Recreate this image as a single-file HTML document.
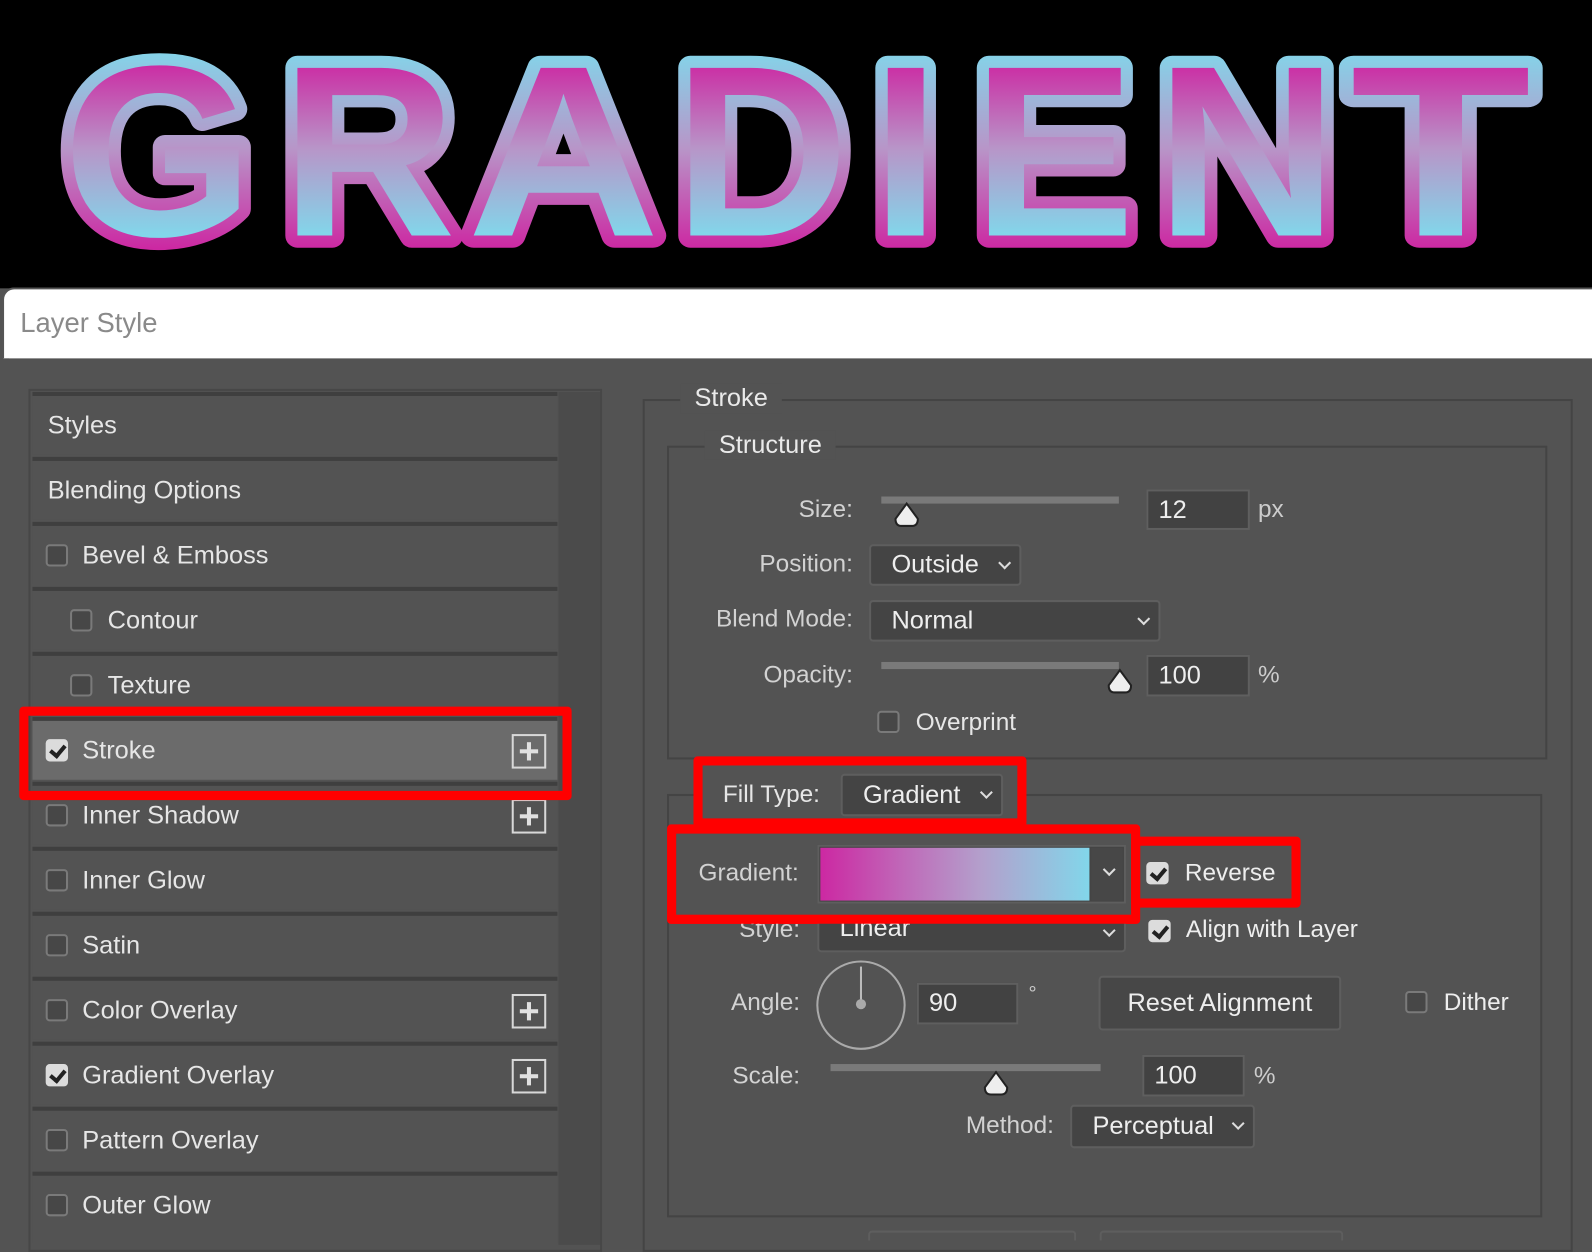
<!DOCTYPE html>
<html><head><meta charset="utf-8"><style>
*{margin:0;padding:0;box-sizing:border-box}
html,body{width:1592px;height:1237px;overflow:hidden;background:#535353}
#w{position:absolute;left:0;top:0;width:1568px;height:1218px;transform:scale(1.01531);transform-origin:0 0;font-family:"Liberation Sans",sans-serif;color:#e6e6e6}
.a{position:absolute}
.top{left:0;top:0;width:1568px;height:284px;background:#000}
.title{left:2px;top:283px;width:1566px;height:70px;background:#fff;border-top:2px solid #555;border-left:2px solid #555;border-radius:12px 0 0 0}
.title span{position:absolute;left:16px;top:18px;font-size:27px;color:#8a8a8a}
.lp{left:28px;top:383px;width:565px;height:850px;border:2px solid #474747;border-right:2px solid #474747}
.sb{left:550px;top:386px;width:41px;height:840px;background:#4b4b4b}
.row{position:absolute;left:32px;width:517px;height:62px;background:#535353;border-top:4px solid #3f3f3f;font-size:25px}
.row span{position:absolute;top:15px}
.cb{position:absolute;width:22px;height:22px;border:2px solid #7a7a7a;border-radius:4px;background:#474747;top:18px}
.cb.on{background:#dcdcdc;border-color:#dcdcdc}
.cb.on:after{content:"";position:absolute;left:5px;top:1px;width:6px;height:11px;border:solid #222;border-width:0 4px 4px 0;transform:rotate(40deg)}
.plus{position:absolute;left:472px;top:13px;width:34px;height:34px;border:2px solid #d8d8d8}
.plus:before{content:"";position:absolute;left:6px;top:13px;width:18px;height:4px;background:#e0e0e0}
.plus:after{content:"";position:absolute;left:13px;top:6px;width:4px;height:18px;background:#e0e0e0}
.red{border:9px solid #ff0000;border-radius:4px}
.fs{border:2px solid #444}
.lg{position:absolute;background:#535353;font-size:25px;padding:0 14px;color:#eaeaea}
.lbl{position:absolute;font-size:24px;color:#d2d2d2;text-align:right}
.box{position:absolute;background:#424242;border:2px solid #5f5f5f;font-size:25px;color:#eee;padding-left:10px}
.dd{position:absolute;background:#444;border:2px solid #5e5e5e;border-radius:4px;font-size:25px;color:#eee;padding-left:20px}
.dd i,.ch{position:absolute;right:10px;top:12px;width:9px;height:9px;border:solid #ddd;border-width:0 2px 2px 0;transform:rotate(45deg)}
.track{position:absolute;height:7px;background:#7a7a7a}
.thumb{position:absolute;width:26px;height:26px}
</style></head><body><div id="w">
<div class="a top">
<svg width="1568" height="284" viewBox="0 0 1568 284">
<defs>
<linearGradient id="f" gradientUnits="userSpaceOnUse" x1="0" y1="60" x2="0" y2="232"><stop offset="0" stop-color="#cc28a2"/><stop offset=".5" stop-color="#b895c8"/><stop offset="1" stop-color="#82d6ea"/></linearGradient>
<linearGradient id="s" gradientUnits="userSpaceOnUse" x1="0" y1="48" x2="0" y2="245"><stop offset="0" stop-color="#82d6ea"/><stop offset=".5" stop-color="#b895c8"/><stop offset="1" stop-color="#cc28a2"/></linearGradient>
</defs>
<g font-family="Liberation Sans" font-weight="bold" font-size="240" fill="url(#f)" stroke="url(#s)" stroke-width="24" stroke-linejoin="round" paint-order="stroke">
<text x="62" y="232" textLength="188" lengthAdjust="spacingAndGlyphs">G</text>
<text x="277" y="232" textLength="172" lengthAdjust="spacingAndGlyphs">R</text>
<text x="460" y="232" textLength="190" lengthAdjust="spacingAndGlyphs">A</text>
<text x="664" y="232" textLength="172" lengthAdjust="spacingAndGlyphs">D</text>
<text x="858" y="232" textLength="68" lengthAdjust="spacingAndGlyphs">I</text>
<text x="958" y="232" textLength="160" lengthAdjust="spacingAndGlyphs">E</text>
<text x="1138" y="232" textLength="180" lengthAdjust="spacingAndGlyphs">N</text>
<text x="1330" y="232" textLength="178" lengthAdjust="spacingAndGlyphs">T</text>
</g></svg></div>
<div class="a title"><span>Layer Style</span></div>

<div class="a lp"></div><div class="a sb"></div>
<div class="row" style="top:386px"><span style="left:15px">Styles</span></div>
<div class="row" style="top:450px"><span style="left:15px">Blending Options</span></div>
<div class="row" style="top:514px"><div class="cb" style="left:13px"></div><span style="left:49px">Bevel &amp; Emboss</span></div>
<div class="row" style="top:578px"><div class="cb" style="left:37px"></div><span style="left:74px">Contour</span></div>
<div class="row" style="top:642px"><div class="cb" style="left:37px"></div><span style="left:74px">Texture</span></div>
<div class="row" style="top:706px;background:#6b6b6b"><div class="cb on" style="left:13px"></div><span style="left:49px">Stroke</span><div class="plus"></div></div>
<div class="row" style="top:770px"><div class="cb" style="left:13px"></div><span style="left:49px">Inner Shadow</span><div class="plus"></div></div>
<div class="row" style="top:834px"><div class="cb" style="left:13px"></div><span style="left:49px">Inner Glow</span></div>
<div class="row" style="top:898px"><div class="cb" style="left:13px"></div><span style="left:49px">Satin</span></div>
<div class="row" style="top:962px"><div class="cb" style="left:13px"></div><span style="left:49px">Color Overlay</span><div class="plus"></div></div>
<div class="row" style="top:1026px"><div class="cb on" style="left:13px"></div><span style="left:49px">Gradient Overlay</span><div class="plus"></div></div>
<div class="row" style="top:1090px"><div class="cb" style="left:13px"></div><span style="left:49px">Pattern Overlay</span></div>
<div class="row" style="top:1154px;height:70px"><div class="cb" style="left:13px"></div><span style="left:49px">Outer Glow</span></div>
<div class="a red" style="left:19px;top:696px;width:544px;height:92px"></div>

<div class="a fs" style="left:633px;top:393px;width:916px;height:840px"></div>
<div class="lg" style="left:670px;top:378px">Stroke</div>
<div class="a fs" style="left:657px;top:439px;width:867px;height:309px"></div>
<div class="lg" style="left:694px;top:424px">Structure</div>
<div class="a fs" style="left:657px;top:782px;width:862px;height:417px"></div>

<div class="lbl" style="left:700px;top:488px;width:140px">Size:</div>
<div class="track" style="left:868px;top:489px;width:234px"></div>
<svg class="thumb" style="left:880px;top:494px" viewBox="0 0 26 26"><path d="M13 2 L24 17 Q24 24 18 24 L8 24 Q2 24 2 17 Z" fill="#eee" stroke="#222" stroke-width="2"/></svg>
<div class="box" style="left:1129px;top:482px;width:102px;height:40px;line-height:36px">12</div>
<div class="lbl" style="left:1239px;top:488px;color:#ccc">px</div>

<div class="lbl" style="left:700px;top:542px;width:140px">Position:</div>
<div class="dd" style="left:856px;top:536px;width:150px;height:41px;line-height:37px">Outside<i></i></div>
<div class="lbl" style="left:690px;top:596px;width:150px">Blend Mode:</div>
<div class="dd" style="left:856px;top:591px;width:287px;height:41px;line-height:37px">Normal<i></i></div>
<div class="lbl" style="left:700px;top:651px;width:140px">Opacity:</div>
<div class="track" style="left:868px;top:652px;width:234px"></div>
<svg class="thumb" style="left:1090px;top:658px" viewBox="0 0 26 26"><path d="M13 2 L24 17 Q24 24 18 24 L8 24 Q2 24 2 17 Z" fill="#eee" stroke="#222" stroke-width="2"/></svg>
<div class="box" style="left:1129px;top:645px;width:102px;height:41px;line-height:37px">100</div>
<div class="lbl" style="left:1239px;top:651px;color:#ccc">%</div>
<div class="cb" style="left:864px;top:700px"></div>
<div class="lbl" style="left:902px;top:698px;color:#e6e6e6">Overprint</div>

<div class="a" style="left:690px;top:752px;width:316px;height:58px;background:#535353"></div>
<div class="lbl" style="left:712px;top:769px;color:#e6e6e6">Fill Type:</div>
<div class="dd" style="left:828px;top:762px;width:160px;height:42px;line-height:38px">Gradient<i></i></div>
<div class="a red" style="left:683px;top:745px;width:328px;height:70px"></div>

<div class="lbl" style="left:688px;top:846px;color:#d2d2d2">Gradient:</div>
<div class="a" style="left:805px;top:832px;width:304px;height:58px;background:#444;border:2px solid #5e5e5e"></div>
<div class="a" style="left:808px;top:835px;width:265px;height:52px;background:linear-gradient(90deg,#cc28a2,#c067b8 30%,#b3a0cc 60%,#82d6ea)"></div>
<div class="a" style="left:1075px;top:835px;width:31px;height:52px;background:#474747"><div class="ch" style="right:9px;top:17px"></div></div>
<div class="a red" style="left:657px;top:812px;width:466px;height:98px"></div>
<div class="cb on" style="left:1129px;top:849px"></div>
<div class="lbl" style="left:1167px;top:846px;color:#eee">Reverse</div>
<div class="a red" style="left:1114px;top:824px;width:167px;height:70px"></div>

<div class="lbl" style="left:700px;top:902px;width:88px">Style:</div>
<div class="dd" style="left:805px;top:906px;width:304px;height:32px;line-height:20px;overflow:hidden;padding-top:0"><span style="position:relative;top:-4px">Linear</span><i style="top:4px"></i></div>
<div class="a red" style="left:657px;top:812px;width:466px;height:98px;border-top:none;border-left:none;border-right:none;background:transparent"></div>
<div class="cb on" style="left:1131px;top:906px"></div>
<div class="lbl" style="left:1168px;top:902px;color:#eee">Align with Layer</div>

<div class="lbl" style="left:700px;top:974px;width:88px">Angle:</div>
<div class="a" style="left:804px;top:946px;width:88px;height:88px;border:2px solid #aaa;border-radius:50%"></div>
<div class="a" style="left:847px;top:952px;width:2px;height:36px;background:#bbb"></div>
<div class="a" style="left:843px;top:984px;width:10px;height:10px;border-radius:50%;background:#aaa"></div>
<div class="box" style="left:903px;top:968px;width:100px;height:41px;line-height:37px">90</div>
<div class="lbl" style="left:1013px;top:968px;color:#ccc;font-size:20px">°</div>
<div class="a" style="left:1082px;top:961px;width:239px;height:54px;background:#474747;border:2px solid #5e5e5e;border-radius:4px;font-size:25px;text-align:center;line-height:50px;color:#eee">Reset Alignment</div>
<div class="cb" style="left:1384px;top:976px"></div>
<div class="lbl" style="left:1422px;top:974px;color:#eee">Dither</div>

<div class="lbl" style="left:700px;top:1046px;width:88px">Scale:</div>
<div class="track" style="left:818px;top:1048px;width:266px"></div>
<svg class="thumb" style="left:968px;top:1054px" viewBox="0 0 26 26"><path d="M13 2 L24 17 Q24 24 18 24 L8 24 Q2 24 2 17 Z" fill="#eee" stroke="#222" stroke-width="2"/></svg>
<div class="box" style="left:1125px;top:1039px;width:101px;height:41px;line-height:37px">100</div>
<div class="lbl" style="left:1235px;top:1046px;color:#ccc">%</div>
<div class="lbl" style="left:900px;top:1095px;width:138px">Method:</div>
<div class="dd" style="left:1054px;top:1088px;width:182px;height:43px;line-height:39px">Perceptual<i></i></div>
<div class="a" style="left:855px;top:1212px;width:205px;height:10px;border:2px solid #5e5e5e;border-bottom:none;border-radius:4px 4px 0 0"></div>
<div class="a" style="left:1083px;top:1212px;width:240px;height:10px;border:2px solid #5e5e5e;border-bottom:none;border-radius:4px 4px 0 0"></div>
</div></body></html>
